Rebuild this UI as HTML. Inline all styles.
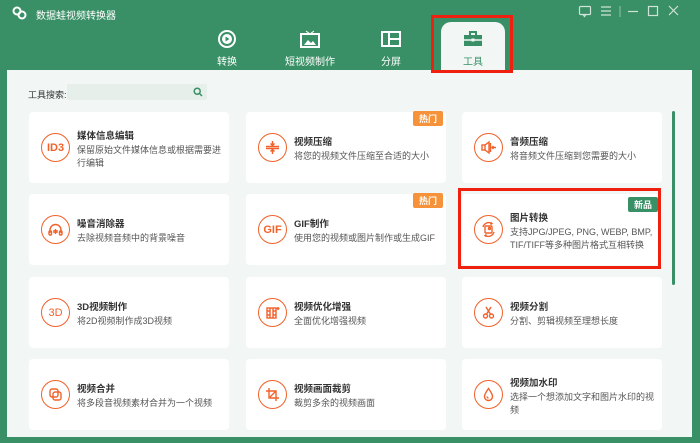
<!DOCTYPE html>
<html><head><meta charset="utf-8"><style>
*{margin:0;padding:0;box-sizing:border-box}
body{width:700px;height:443px;background:#3a9066;font-family:"Liberation Sans","Noto Sans CJK SC",sans-serif;position:relative;overflow:hidden}
.abs{position:absolute}
.title{left:36px;top:7px;color:#fff;font-size:10px}
.nav{color:#fff;font-size:10px;text-align:center;width:60px}
.panel{left:7px;top:70px;width:685px;height:367px;background:#f2f7f5}
.card{position:absolute;width:200px;height:71px;background:#fff;border-radius:4px}
.ic{position:absolute;left:12px;top:21px;width:29px;height:29px;border:1.5px solid #f0622a;border-radius:50%;color:#f0622a;font-size:10px;font-weight:bold;display:flex;align-items:center;justify-content:center}
.ic svg{width:17px;height:17px;fill:none;stroke:#f0622a;stroke-width:1.4}
.t{position:absolute;left:48px;font-size:9.5px;font-weight:bold;color:#333}
.d{position:absolute;left:48px;font-size:9px;color:#555;line-height:13px;width:150px}
.hot{position:absolute;right:3px;top:-1px;background:#f6933a;color:#fff;font-size:9px;padding:1px 6px;border-radius:2px;font-weight:bold}
.new{position:absolute;right:4px;top:3px;background:#3a9066;color:#fff;font-size:9px;padding:1px 6px;border-radius:2px;font-weight:bold}
</style></head><body>
<svg class="abs" style="left:12px;top:5px" width="16" height="16" viewBox="0 0 16 16"><g fill="none" stroke="#fff" stroke-width="2"><circle cx="5" cy="6" r="3.5"/><circle cx="10" cy="10" r="3.5"/></g></svg>
<div class="abs title">数据蛙视频转换器</div>
<svg class="abs" style="left:578px;top:4px" width="120" height="16" viewBox="0 0 120 16" fill="none" stroke="#cfe3d8" stroke-width="1.2"><rect x="1.5" y="2.5" width="11" height="8" rx="1"/><path d="M5 10.5l1.5 2 1.5-2"/><path d="M23 3h10M23 7h10M23 11h10"/><path d="M42 2v11" stroke-opacity=".5"/><path d="M50 7.5h10"/><rect x="70.5" y="2.5" width="9" height="9"/><path d="M91 2l9 9M100 2l-9 9"/></svg>
<svg class="abs" style="left:217px;top:29px" width="20" height="20" viewBox="0 0 20 20"><circle cx="10" cy="10" r="8" fill="none" stroke="#fff" stroke-width="2"/><circle cx="10" cy="10" r="5" fill="#fff"/><path d="M8.5 7.5v5l4-2.5z" fill="#3a9066"/></svg>
<div class="abs nav" style="left:197px;top:53px">转换</div>
<svg class="abs" style="left:300px;top:30px" width="20" height="18" viewBox="0 0 20 18"><rect x="1" y="4" width="18" height="13" fill="none" stroke="#fff" stroke-width="2"/><path d="M4 15l4-5 3 3 2-2 3 4z" fill="#fff"/><path d="M6 1l4 3 4-3" stroke="#fff" fill="none"/></svg>
<div class="abs nav" style="left:278px;top:53px;width:64px">短视频制作</div>
<svg class="abs" style="left:381px;top:31px" width="20" height="16" viewBox="0 0 20 16"><rect x="1" y="1" width="18" height="14" fill="none" stroke="#fff" stroke-width="2"/><path d="M8 1v14M8 8h11" stroke="#fff" stroke-width="2"/></svg>
<div class="abs nav" style="left:361px;top:53px">分屏</div>
<div class="panel abs"></div>
<div class="abs" style="left:441px;top:22px;width:64px;height:49px;background:#f2f7f5;border-radius:10px 10px 0 0"></div>
<svg class="abs" style="left:463px;top:31px" width="20" height="16" viewBox="0 0 20 16"><rect x="1" y="4" width="18" height="11" fill="#3a9066"/><path d="M7 4V1h6v3" stroke="#3a9066" stroke-width="2" fill="none"/><path d="M1 9h18" stroke="#f2f7f5" stroke-width="1.5"/><rect x="8.5" y="7.5" width="3" height="3" fill="#f2f7f5"/></svg>
<div class="abs nav" style="left:443px;top:53px;color:#3a9066">工具</div>
<div class="abs" style="left:431px;top:15px;width:82px;height:58px;border:3px solid #f0200f"></div>
<div class="abs" style="left:28px;top:88px;font-size:9px;color:#333">工具搜索:</div>
<div class="abs" style="left:67px;top:84px;width:140px;height:16px;background:#e6efea;border-radius:2px"></div>
<svg class="abs" style="left:193px;top:87px" width="10" height="10" viewBox="0 0 10 10"><circle cx="4.2" cy="4.2" r="3" fill="none" stroke="#3a9066" stroke-width="1.5"/><path d="M6.5 6.5l2.5 2.5" stroke="#3a9066" stroke-width="1.5"/></svg>
<div class="abs" style="left:672px;top:111px;width:3px;height:174px;background:#3a9066;border-radius:2px"></div>

<div class="card" style="left:29px;top:112px"><div class="ic" style="font-size:11px">ID3</div><div class="t" style="top:16px">媒体信息编辑</div><div class="d" style="top:32px">保留原始文件媒体信息或根据需要进行编辑</div></div>
<div class="card" style="left:246px;top:112px"><div class="hot">热门</div><div class="ic"><svg viewBox="0 0 17 17"><path d="M2 7.5h13M2 9.5h13M8.5 2v4M6.5 4.5l2 2 2-2M8.5 15v-4M6.5 12.5l2-2 2 2"/></svg></div><div class="t" style="top:22px">视频压缩</div><div class="d" style="top:38px">将您的视频文件压缩至合适的大小</div></div>
<div class="card" style="left:462px;top:112px"><div class="ic"><svg viewBox="0 0 17 17"><rect x="2" y="6" width="3" height="5"/><path d="M5 6l4-3v11l-4-3M10.5 4v9M16 8.5h-4M13.5 7l-1.5 1.5 1.5 1.5"/></svg></div><div class="t" style="top:22px">音频压缩</div><div class="d" style="top:38px">将音频文件压缩到您需要的大小</div></div>

<div class="card" style="left:29px;top:194px"><div class="ic"><svg viewBox="0 0 17 17"><path d="M3 12V9a5.5 5.5 0 0 1 11 0v3"/><rect x="2" y="10" width="2.5" height="4" rx="1"/><rect x="12.5" y="10" width="2.5" height="4" rx="1"/><path d="M7 9v3M8.5 8v5M10 9v3"/></svg></div><div class="t" style="top:22px">噪音消除器</div><div class="d" style="top:38px">去除视频音频中的背景噪音</div></div>
<div class="card" style="left:246px;top:194px"><div class="hot">热门</div><div class="ic" style="font-size:11px">GIF</div><div class="t" style="top:22px">GIF制作</div><div class="d" style="top:38px">使用您的视频或图片制作或生成GIF</div></div>
<div class="card" style="left:462px;top:194px"><div class="new">新品</div><div class="ic"><svg viewBox="0 0 17 17"><rect x="5" y="5" width="7" height="7" rx="1"/><circle cx="9.5" cy="7.5" r="1"/><path d="M3 6a6 6 0 0 1 9-3.5M14 11a6 6 0 0 1-9 3.5M11 1.5l1 1-1.5 1M6 15.5l-1-1 1.5-1"/></svg></div><div class="t" style="top:16px">图片转换</div><div class="d" style="top:32px">支持JPG/JPEG, PNG, WEBP, BMP, TIF/TIFF等多种图片格式互相转换</div></div>
<div class="abs" style="left:458px;top:188px;width:203px;height:81px;border:3px solid #f0200f"></div>

<div class="card" style="left:29px;top:277px"><div class="ic" style="font-size:11px;font-weight:normal">3D</div><div class="t" style="top:22px">3D视频制作</div><div class="d" style="top:38px">将2D视频制作成3D视频</div></div>
<div class="card" style="left:246px;top:277px"><div class="ic"><svg viewBox="0 0 17 17"><rect x="3" y="4" width="9" height="10"/><path d="M6 4v10M9 4v10M3 7h3M3 11h3M9 7h3M9 11h3M14 3v3M12.5 4.5h3"/></svg></div><div class="t" style="top:22px">视频优化增强</div><div class="d" style="top:38px">全面优化增强视频</div></div>
<div class="card" style="left:462px;top:277px"><div class="ic"><svg viewBox="0 0 17 17"><circle cx="5.5" cy="12" r="2"/><circle cx="11.5" cy="12" r="2"/><path d="M6.5 10.3L11 3M10.5 10.3L6 3"/></svg></div><div class="t" style="top:22px">视频分割</div><div class="d" style="top:38px">分割、剪辑视频至理想长度</div></div>

<div class="card" style="left:29px;top:359px"><div class="ic"><svg viewBox="0 0 17 17"><rect x="3" y="3" width="8" height="8" rx="2"/><rect x="6" y="6" width="8" height="8" rx="2"/></svg></div><div class="t" style="top:22px">视频合并</div><div class="d" style="top:38px">将多段音视频素材合并为一个视频</div></div>
<div class="card" style="left:246px;top:359px"><div class="ic"><svg viewBox="0 0 17 17"><path d="M5 2v10h10M2 5h10v10M6 11l6-6"/></svg></div><div class="t" style="top:22px">视频画面裁剪</div><div class="d" style="top:38px">裁剪多余的视频画面</div></div>
<div class="card" style="left:462px;top:359px"><div class="ic"><svg viewBox="0 0 17 17"><path d="M8.5 2.5c-2 3-4 5.5-4 8a4 4 0 0 0 8 0c0-2.5-2-5-4-8z"/><path d="M7 10.5a1.5 1.5 0 0 0 1.5 1.5"/></svg></div><div class="t" style="top:16px">视频加水印</div><div class="d" style="top:32px">选择一个想添加文字和图片水印的视频</div></div>
</body></html>
